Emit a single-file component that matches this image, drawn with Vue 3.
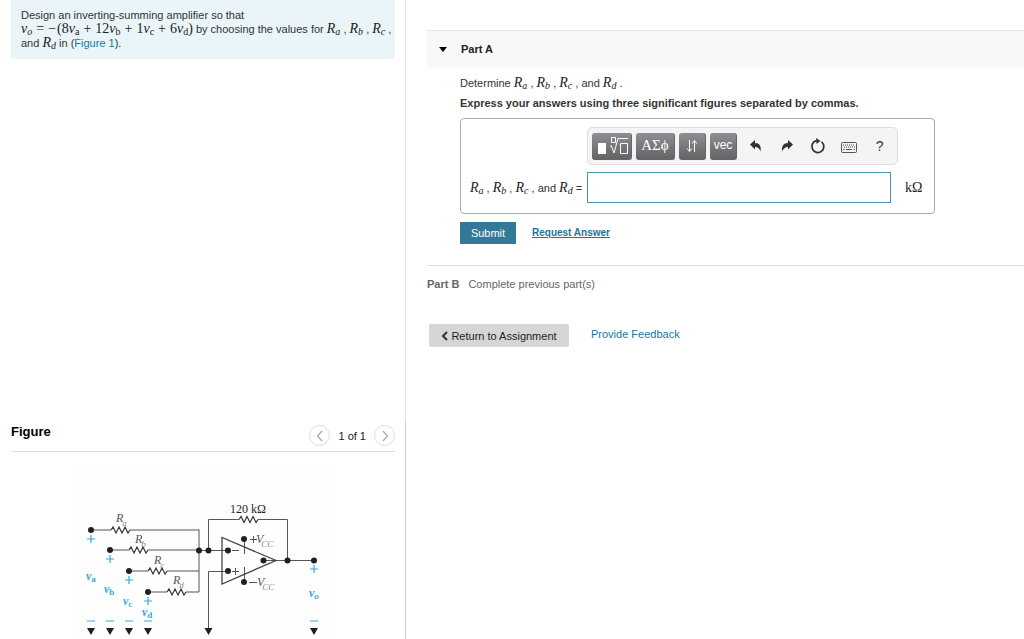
<script setup>
import { ref } from 'vue'

const answer = ref('')
const open = ref(true)

const inputs = [
  { name: 'a', x: 91, y: 530, zig: 111, lx: 116, ly: 522, vx: 87, vy: 580 },
  { name: 'b', x: 110, y: 550, zig: 129, lx: 135, ly: 543, vx: 105, vy: 593 },
  { name: 'c', x: 129, y: 571, zig: 148, lx: 154, ly: 564, vx: 124, vy: 605 },
  { name: 'd', x: 148, y: 592, zig: 167, lx: 173, ly: 584, vx: 143, vy: 616 },
]
const zigzag = (x, y) => `M${x} ${y}l2 -3l3 6l3 -6l3 6l3 -6l3 6l2 -3`
</script>

<template>
  <div class="page">
    <aside class="left">
      <section class="problem-pane">
        <p class="problem">
          Design an inverting-summing amplifier so that<br>
          <span class="math eq"><i>v<sub>o</sub></i><b class="op">=</b><b class="neg">−</b>(8<i>v</i><sub>a</sub><b class="op">+</b>12<i>v</i><sub>b</sub><b class="op">+</b>1<i>v</i><sub>c</sub><b class="op">+</b>6<i>v</i><sub>d</sub>)</span>
          by choosing the values for
          <i class="math">R<sub>a</sub></i> , <i class="math">R<sub>b</sub></i> , <i class="math">R<sub>c</sub></i> ,<br>
          and <i class="math">R<sub>d</sub></i> in (<a href="#figure">Figure 1</a>).
        </p>
      </section>
      <section id="figure" class="figure-pane">
        <header class="figure-head">
          <h2>Figure</h2>
          <nav class="pager">
            <button type="button" aria-label="Previous figure"><svg width="20" height="20" viewBox="0 0 20 20"><path d="M12 5L7.500 10L12 15" /></svg></button>
            <span>1 of 1</span>
            <button type="button" aria-label="Next figure"><svg width="20" height="20" viewBox="0 0 20 20"><path d="M8 5L12.500 10L8 15" /></svg></button>
          </nav>
        </header>
        <svg class="circuit" width="258" height="175" viewBox="73 464 258 175" role="img" aria-label="Inverting-summing amplifier circuit">
          <g v-for="p in inputs" :key="p.name">
            <path class="wire" :d="`M${p.x} ${p.y}H${p.zig}M${p.zig + 19} ${p.y}H199`" />
            <path class="wire bold" :d="zigzag(p.zig, p.y)" />
            <circle :cx="p.x" :cy="p.y" r="3" />
            <text class="sym" :x="p.lx" :y="p.ly">R<tspan class="small" dy="4" dx="-1">{{ p.name }}</tspan></text>
            <path class="sign" :d="`M${p.x - 4} ${p.y + 9}h8m-4 -4v8M${p.x - 4} 621h8`" />
            <text class="volt" :x="p.vx - 1" :y="p.vy">v<tspan class="vsub" dy="2">{{ p.name }}</tspan></text>
            <path :d="`M${p.x - 4} 628h8l-4 7z`" />
          </g>
          <path class="wire" d="M199 529.500V592M199 550.500H228M208.500 550V519.500H239M258 519.500H287.500V560.500M263 560.500H314M228 571.500H208.500V628M244.500 539V554M244.500 567V582" />
          <path class="wire bold" d="M239 519.500l2 -3l3 6l3 -6l3 6l3 -6l3 6l2 -3" />
          <path class="amp" d="M222 537.500V584L276 560.500z" />
          <circle cx="199" cy="550.500" r="3" />
          <circle cx="208.500" cy="550.500" r="3" />
          <circle cx="228" cy="550.500" r="3" />
          <circle cx="228" cy="571" r="3" />
          <circle cx="244" cy="539" r="3" />
          <circle cx="244" cy="582" r="3" />
          <circle cx="263.500" cy="560.500" r="3" />
          <circle cx="287.500" cy="560.500" r="3" />
          <circle cx="314" cy="560.500" r="3" />
          <path class="wire" d="M232 550.500h7M232 571.500h7M235.500 568v7M250 539.500h7M253.500 536v7M249 582.500h8" />
          <path d="M204.500 628h8l-4 7zM310 628h8l-4 7z" />
          <text class="label" x="230" y="513">120 kΩ</text>
          <text class="sym" x="256" y="543">V<tspan class="small" dy="4" dx="-2">CC</tspan></text>
          <text class="sym" x="257" y="586">V<tspan class="small" dy="4" dx="-2">CC</tspan></text>
          <path class="sign" d="M310 569h8m-4 -4v8M310 621h8" />
          <text class="volt" x="309" y="597">v<tspan class="vsub it" dy="2">o</tspan></text>
        </svg>
      </section>
    </aside>

    <main class="right">
      <header class="part-head">
        <button type="button" class="toggle" :aria-expanded="open" @click="open = !open">
          <svg width="8" height="5" viewBox="0 0 8 5"><path d="M0 0H8L4 5z" /></svg>
          Part A
        </button>
      </header>
      <form v-show="open" class="part-body" @submit.prevent>
        <p class="ask">Determine <i class="math">R<sub>a</sub></i> , <i class="math">R<sub>b</sub></i> , <i class="math">R<sub>c</sub></i> , and <i class="math">R<sub>d</sub></i> .</p>
        <p class="express">Express your answers using three significant figures separated by commas.</p>
        <div class="answer">
          <div class="toolbar">
            <button type="button" class="key wide" aria-label="Templates">
              <svg width="32" height="20" viewBox="0 0 32 20">
                <path fill="#fff" d="M2 7h8v11H2z" />
                <path class="line" d="M15.500 1.500h4v5h-4zM14 10l1.500 0l2.500 7l4 -14.500h10M24.500 7.500h7v10h-7z" />
              </svg>
            </button>
            <button type="button" class="key greek">ΑΣϕ</button>
            <button type="button" class="key narrow" aria-label="Arrows">
              <svg width="14" height="16" viewBox="0 0 14 16"><path class="line" d="M4.500 2V13M2 10.500L4.500 13.500L7 10.500M9.500 14V3M7 5.500L9.500 2.500L12 5.500" /></svg>
            </button>
            <button type="button" class="key narrow">vec</button>
            <button type="button" class="tool" aria-label="Undo"><svg width="14" height="14" viewBox="0 0 14 14"><path d="M1 5.500L6 1V4C10.500 4 12.500 7 11.500 12.500C10.500 9.500 9 8 6 8V10.500z" /></svg></button>
            <button type="button" class="tool" aria-label="Redo"><svg width="14" height="14" viewBox="0 0 14 14"><path d="M13 5.500L8 1V4C3.500 4 1.500 7 2 12.500C3.500 9.500 5 8 8 8V10.500z" /></svg></button>
            <button type="button" class="tool" aria-label="Reset"><svg width="16" height="16" viewBox="0 0 16 16"><path class="ring" d="M11.500 3.800A6 6 0 1 1 6.500 2.700" /><path d="M6 0L10.500 3L6.500 6z" /></svg></button>
            <button type="button" class="tool" aria-label="Keyboard">
              <svg class="board" width="16" height="13" viewBox="0 -2 16 13">
                <rect class="case" x="0.500" y="0.500" width="15" height="10" rx="1" />
                <path class="dots" d="M2 3H14M3 5H14" />
                <path class="case" d="M2 7.500h1.500M5 7.500h6M12.500 7.500H14" />
              </svg>
            </button>
            <button type="button" class="tool help" aria-label="Help">?</button>
          </div>
          <label for="resistors"><i class="math">R<sub>a</sub></i> , <i class="math">R<sub>b</sub></i> , <i class="math">R<sub>c</sub></i> , and <i class="math">R<sub>d</sub></i> =</label>
          <input id="resistors" v-model="answer" type="text">
          <span class="unit">kΩ</span>
        </div>
        <div class="actions">
          <button type="submit" class="submit">Submit</button>
          <a href="#answer">Request Answer</a>
        </div>
      </form>
      <section class="part-b"><h2>Part B</h2><span>Complete previous part(s)</span></section>
      <footer class="bottom">
        <button type="button" class="return">
          <svg width="7" height="10" viewBox="0 0 7 10"><path d="M6 1L2 5L6 9" /></svg>
          Return to Assignment
        </button>
        <a href="#feedback">Provide Feedback</a>
      </footer>
    </main>
  </div>
</template>

<style>
body { margin: 0; background: #fff; }
</style>

<style scoped>
* { box-sizing: border-box; }
.page { display: flex; min-height: 100vh; font-family: "Liberation Sans", Arial, sans-serif; font-size: 11px; color: #333; }
h2, p { margin: 0; }
button { font-family: inherit; padding: 0; border: 0; background: none; cursor: pointer; }
a { color: #1c759b; text-decoration: none; }
.math { font-family: "Liberation Serif", "Times New Roman", serif; font-size: 14px; line-height: 13px; color: #222; }
.math sub { font-size: 10px; line-height: 0; vertical-align: -2px; }
.math b { font-weight: normal; }
.op { margin: 0 4px; }
.neg { margin-right: 1px; }

.left { display: flex; flex-direction: column; flex: 0 0 406px; }
.problem-pane { flex: 1; padding: 0 10px 0 11px; border-right: 1px solid #e4e5ec; }
.problem { height: 59px; padding: 9px 0 0 10px; line-height: 13px; white-space: nowrap; background: #e9f5f8; }
.figure-pane { padding: 0 10px 0 11px; border-right: 1px solid #c6cbd9; }
.figure-head { display: flex; justify-content: space-between; height: 31px; margin-bottom: 12px; border-bottom: 1px solid #ddd; }
.figure-head h2 { font-size: 13px; line-height: 22px; color: #000; }
.pager { display: flex; align-items: center; gap: 8px; height: 29px; color: #222; }
.pager button { width: 21px; height: 21px; border: 1px solid #ddd; border-radius: 50%; display: grid; place-items: center; }
.pager path { fill: none; stroke: #aaa; stroke-width: 1.300; }
.circuit { display: block; margin-left: 62px; fill: #231f20; background: #fefefe; }
.wire { fill: none; stroke: #555; stroke-width: 1; }
.bold { stroke: #333; stroke-width: 1.200; }
.amp { fill: none; stroke: #444; stroke-width: 1.300; }
.sign { fill: none; stroke: #35a9df; stroke-width: 1.200; }
.sym, .label, .volt { font-family: "Liberation Serif", "Times New Roman", serif; font-size: 12px; }
.sym { font-style: italic; fill: #555; }
.small { font-size: 9px; fill: #888; }
.volt { font-style: italic; font-weight: bold; fill: #35a9df; }
.vsub { font-style: normal; font-size: 9px; }
.it { font-style: italic; }

.right { flex: 1; min-width: 0; padding: 30px 0 0 21px; }
.part-head { height: 38px; background: #f8f8f8; border-top: 1px solid #e3e3e3; }
.toggle { display: flex; align-items: center; gap: 14px; height: 36px; padding-left: 12px; font-size: 11px; font-weight: bold; color: #222; }
.part-body { padding: 7px 12px 21px 33px; border-bottom: 1px solid #ddd; }
.ask { line-height: 16px; }
.express { margin-top: 4px; font-weight: bold; line-height: 17px; }
.answer { display: grid; grid-template-columns: 117px 304px auto; grid-template-rows: 38px 31px; row-gap: 7px; max-width: 475px; margin-top: 6px; padding: 8px 9px 10px; border: 1px solid #aaa; border-radius: 4px; align-items: center; }
.toolbar { grid-column: 2 / 4; justify-self: start; display: flex; align-items: center; width: 311px; height: 38px; padding: 0 2px 0 4px; border: 1px solid #ddd; border-radius: 5px; background: #f4f4f4; }
.key { display: grid; place-items: center; height: 27px; margin-right: 4px; border-radius: 3px; color: #fff; font-size: 12px; line-height: 25px; background: linear-gradient(#8e8e94, #646466); border-right: 1px solid #666; border-bottom: 1px solid #666; }
.wide { width: 40px; }
.greek { width: 39px; font-family: "Liberation Serif", serif; font-size: 15px; }
.narrow { width: 27px; }
.line { fill: none; stroke: #fff; stroke-width: 1; }
.tool { display: grid; place-items: center; flex: 1; height: 27px; font-size: 14px; color: #333; }
.tool svg { fill: #333; }
.ring { fill: none; stroke: #333; stroke-width: 1.700; }
.case { fill: none; stroke: #555; }
.dots { fill: none; stroke: #444; stroke-dasharray: 1 1; }
.answer label { white-space: nowrap; }
.answer input { width: 100%; height: 31px; padding: 0 6px; border: 1px solid #4a92b3; background: #fff; font: 13px "Liberation Sans", sans-serif; outline: none; }
.unit { padding-left: 14px; font-family: "Liberation Serif", serif; font-size: 14px; color: #222; }
.actions { display: flex; align-items: flex-start; gap: 16px; margin-top: 8px; }
.submit { width: 56px; height: 22px; background: #337a99; color: #fff; font-size: 11px; }
.actions a { font-size: 10px; font-weight: bold; line-height: 21px; text-decoration: underline; }
.part-b { display: flex; gap: 9px; padding-top: 10px; font-size: 11px; line-height: 16px; color: #666; }
.part-b h2 { font-size: 11px; }
.bottom { display: flex; gap: 22px; margin: 32px 0 0 2px; font-size: 11px; }
.return { display: flex; align-items: center; justify-content: center; gap: 3px; width: 140px; height: 23px; border-radius: 2px; background: #d6d6d6; color: #222; font-size: 11px; }
.return path { fill: none; stroke: #333; stroke-width: 2; }
.bottom a { line-height: 21px; }
</style>
